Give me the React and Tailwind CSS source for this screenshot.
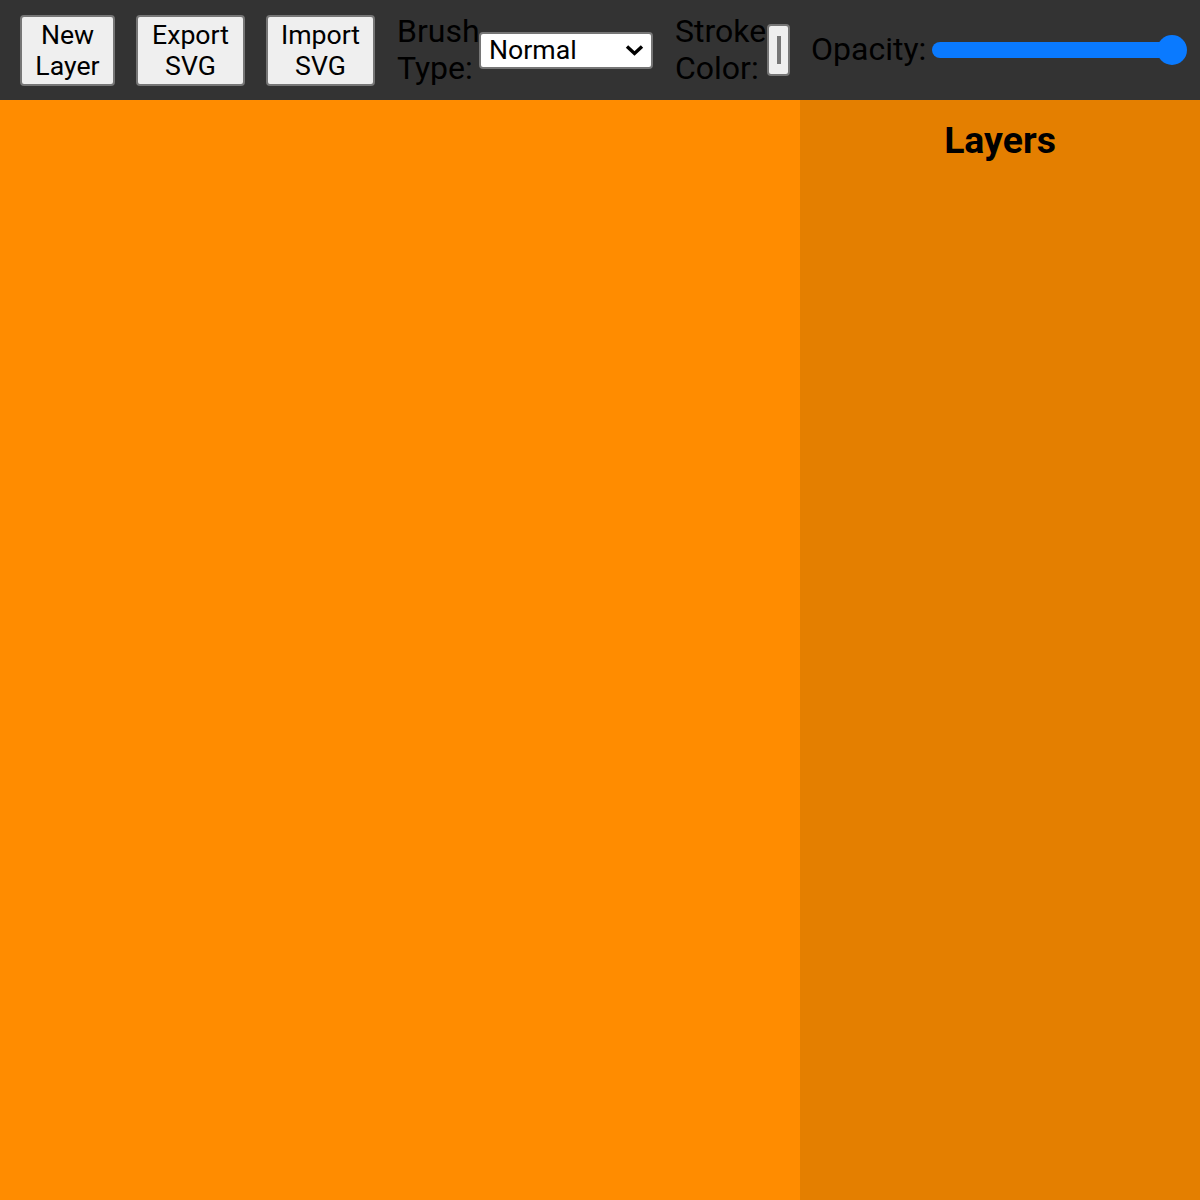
import React from 'react';

const ToolButton = ({ label, className }) => (
    <button className={`shrink-0 bg-[#efefef] border-2 border-[#767676] rounded-[4px] px-[12px] pt-[3px] pb-[2px] text-[26.67px] leading-[31px] text-black text-center ${className}`}>
        {label}
    </button>
);

const Label = ({ children, className }) => (
    <span className={`shrink-0 text-[32px] leading-[37.5px] text-black ${className}`}>{children}</span>
);

export default function App() {
    return (
        <div className="w-[1200px] h-[1200px] flex flex-col overflow-hidden font-['Roboto','Liberation_Sans',sans-serif]">
            <div className="h-[100px] shrink-0 bg-[#333333] flex items-center pl-[20px]">
                <ToolButton label="New Layer" className="w-[95px]" />
                <ToolButton label="Export SVG" className="w-[109px] ml-[21px]" />
                <ToolButton label="Import SVG" className="w-[109px] ml-[21px]" />

                <Label className="w-[82px] ml-[22px]">Brush Type:</Label>
                <div className="shrink-0 w-[174px] h-[37px] bg-white border-2 border-[#767676] rounded-[4px] flex items-center justify-between pl-[8px] pr-[7px]">
                    <span className="text-[26.67px] leading-[31px] text-black">Normal</span>
                    <svg width="19" height="12" viewBox="0 0 19 12" fill="none">
                        <path d="M2 2.5 L9.5 9.5 L17 2.5" stroke="#000" strokeWidth="3.4" />
                    </svg>
                </div>

                <Label className="w-[91px] ml-[22px]">Stroke Color:</Label>
                <div className="shrink-0 w-[23px] h-[52px] ml-px bg-[#efefef] border-2 border-[#767676] rounded-[4px] flex items-center justify-center">
                    <div className="w-[4px] h-[28px] bg-[#777777]" />
                </div>

                <Label className="ml-[21px]">Opacity:</Label>
                <div className="relative shrink-0 w-[255px] h-[30px] ml-[6px] flex items-center">
                    <div className="w-[245px] h-[16px] rounded-full bg-[#0a7aff]" />
                    <div className="absolute right-0 top-0 w-[30px] h-[30px] rounded-full bg-[#0a7aff]" />
                </div>
            </div>
            <div className="flex-1 flex">
                <div className="flex-1 bg-[#ff8c00]" />
                <div className="w-[400px] bg-[#e47f00] pt-[18px]">
                    <h3 className="text-[37.44px] leading-[44px] font-bold text-center text-black">Layers</h3>
                </div>
            </div>
        </div>
    );
}
